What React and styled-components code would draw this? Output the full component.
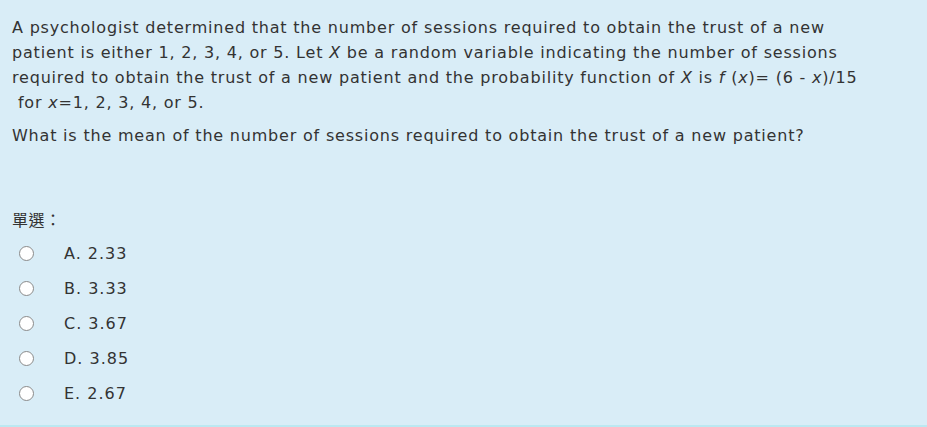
import React from 'react';
import styled, { createGlobalStyle } from 'styled-components';

const GlobalStyle = createGlobalStyle`
  html, body {
    margin: 0;
    padding: 0;
    background: #d9edf7;
  }
`;

const Panel = styled.div`
  box-sizing: border-box;
  width: 927px;
  height: 427px;
  background: #d9edf7;
  border-bottom: 2px solid #bce8f1;
  padding: 15px 12px 0 12px;
  color: #333;
  font-family: "DejaVu Sans", Verdana, sans-serif;
  font-size: 16px;
  letter-spacing: 0.8px;
  line-height: 25px;
`;

const Question = styled.p`
  margin: 0 0 8px 0;
  white-space: nowrap;
`;

const Var = styled.i`
  font-style: italic;
`;

const Answers = styled.div`
  margin-top: 61px;
`;

const Kind = styled.div`
  font-family: "Noto Sans CJK TC", sans-serif;
  font-size: 16px;
  letter-spacing: 0.5px;
  line-height: 20px;
  margin-bottom: 7px;
`;

const Option = styled.label`
  display: flex;
  align-items: center;
  height: 35px;
  letter-spacing: 1px;
`;

const Radio = styled.span`
  box-sizing: border-box;
  width: 15px;
  height: 15px;
  border: 1.5px solid #8a8a8a;
  border-radius: 50%;
  background: #fff;
  margin-left: 7px;
  margin-right: 30px;
`;

const options = ['A. 2.33', 'B. 3.33', 'C. 3.67', 'D. 3.85', 'E. 2.67'];

export default function App() {
  return (
    <Panel>
      <GlobalStyle />
      <Question>
        A psychologist determined that the number of sessions required to obtain the trust of a new
        <br />
        patient is either 1, 2, 3, 4, or 5. Let <Var>X</Var> be a random variable indicating the number of sessions
        <br />
        required to obtain the trust of a new patient and the probability function of <Var>X</Var> is <Var>f</Var> (<Var>x</Var>)= (6 - <Var>x</Var>)/15
        <br />
        &nbsp;for <Var>x</Var>=1, 2, 3, 4, or 5.
      </Question>
      <Question>What is the mean of the number of sessions required to obtain the trust of a new patient?</Question>
      <Answers>
        <Kind>單選：</Kind>
        {options.map((o) => (
          <Option key={o}>
            <Radio />
            {o}
          </Option>
        ))}
      </Answers>
    </Panel>
  );
}
